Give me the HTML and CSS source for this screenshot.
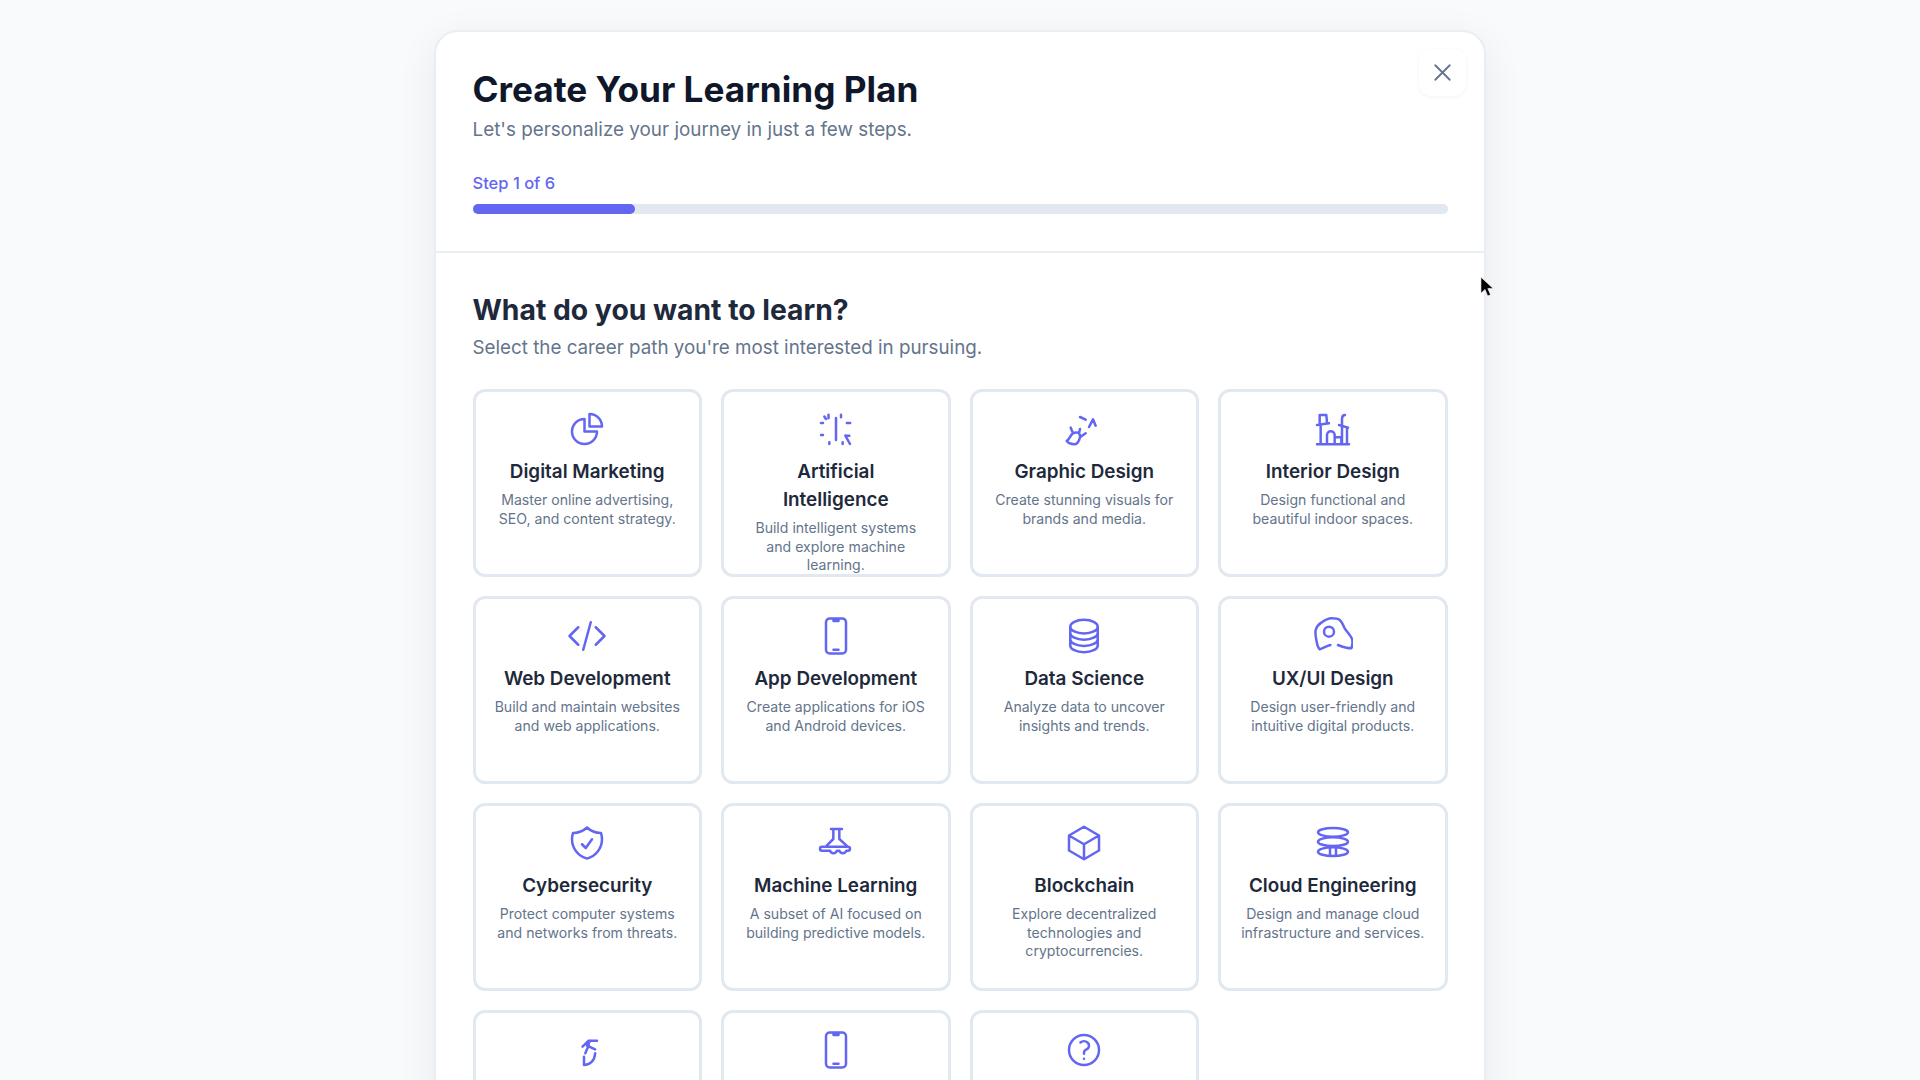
FILE: index.html
```html
<!DOCTYPE html>
<html lang="en">
<head>
    <meta charset="UTF-8">
    <meta name="viewport" content="width=device-width, initial-scale=1.0">
    <title>Create Your Learning Plan</title>
    <link rel="stylesheet" href="styles.css">
</head>
<body>
    <div class="modal">
        <div class="modal-header">
            <button class="close-button" aria-label="Close">
                <svg viewBox="0 0 24 24"><path d="M6 18 18 6M6 6l12 12"/></svg>
            </button>
            <h1>Create Your Learning Plan</h1>
            <p class="subtitle">Let's personalize your journey in just a few steps.</p>
            <div class="step-label">Step 1 of 6</div>
            <div class="progress-track"><div class="progress-fill"></div></div>
        </div>

        <div class="modal-body">
            <h2>What do you want to learn?</h2>
            <p class="section-text">Select the career path you're most interested in pursuing.</p>

            <div class="path-grid">
                <div class="path-card">
                    <svg class="path-icon" viewBox="0 0 24 24"><path d="M10.5 6a7.5 7.5 0 1 0 7.5 7.5h-7.5V6Z"/><path d="M13.5 10.5H21A7.5 7.5 0 0 0 13.5 3v7.5Z"/></svg>
                    <h3>Digital Marketing</h3>
                    <p>Master online advertising, SEO, and content strategy.</p>
                </div>
                <div class="path-card">
                    <svg class="path-icon" viewBox="0 0 24 24"><path d="M12 5.4v13.2M3 8.4h1.2M3 15.6h1.2M18.5 8.4h2M17.6 16l2.8 5M18 16h2M16 20v1M8 20v1M15 3.5V5M5 4.5 6 6M7.5 3.5v2"/></svg>
                    <h3>Artificial Intelligence</h3>
                    <p>Build intelligent systems and explore machine learning.</p>
                </div>
                <div class="path-card">
                    <svg class="path-icon" viewBox="0 0 24 24"><path d="M9.6 4.8 13 6.4M15 10.8l2.4-4.6 1.6 3.8M4 11.2l1.4 3.4M9.6 12 9 14.6M9.6 17 13 14.6M1.6 19.2C3.4 18.4 3.6 15.6 5.4 14.6 6.6 14 8.6 14 9 14.6 9.8 15.4 9.6 16.4 9.6 17 9 19.4 7.6 21.2 6 21.2 4.4 21.2 2.8 20.6 1.6 19.2Z"/></svg>
                    <h3>Graphic Design</h3>
                    <p>Create stunning visuals for brands and media.</p>
                </div>
                <div class="path-card">
                    <svg class="path-icon" viewBox="0 0 24 24"><path d="M2.4 21.2h19.2M4.6 9.6v11.6M4 8.8V3.6h4l.4 4.6M2.4 9.6l7.2-1M8.4 21.2v-5.6a2.3 2.3 0 0 1 4.6 0v5.6M13 17h4v4.2M17.4 21.2V6c0-1.6.6-2.4 1.8-2.4M15.6 9.6l5.4 1.6M20.4 11.2v10"/></svg>
                    <h3>Interior Design</h3>
                    <p>Design functional and beautiful indoor spaces.</p>
                </div>

                <div class="path-card">
                    <svg class="path-icon" viewBox="0 0 24 24"><path d="M17.25 6.75 22.5 12l-5.25 5.25m-10.5 0L1.5 12l5.25-5.25m7.5-3-4.5 16.5"/></svg>
                    <h3>Web Development</h3>
                    <p>Build and maintain websites and web applications.</p>
                </div>
                <div class="path-card">
                    <svg class="path-icon" viewBox="0 0 24 24"><path d="M10.5 1.5H8.25A2.25 2.25 0 0 0 6 3.75v16.5a2.25 2.25 0 0 0 2.25 2.25h7.5A2.25 2.25 0 0 0 18 20.25V3.75a2.25 2.25 0 0 0-2.25-2.25H13.5m-3 0V3h3V1.5m-3 0h3m-3 18.75h3"/></svg>
                    <h3>App Development</h3>
                    <p>Create applications for iOS and Android devices.</p>
                </div>
                <div class="path-card">
                    <svg class="path-icon" viewBox="0 0 24 24"><path d="M20.25 6.375c0 2.278-3.694 4.125-8.25 4.125S3.75 8.653 3.75 6.375m16.5 0c0-2.278-3.694-4.125-8.25-4.125S3.75 4.097 3.75 6.375m16.5 0v11.25c0 2.278-3.694 4.125-8.25 4.125s-8.25-1.847-8.25-4.125V6.375m16.5 0v3.75m-16.5-3.75v3.75m16.5 0v3.75C20.25 16.153 16.556 18 12 18s-8.25-1.847-8.25-4.125v-3.75m16.5 0c0 2.278-3.694 4.125-8.25 4.125s-8.25-1.847-8.25-4.125"/></svg>
                    <h3>Data Science</h3>
                    <p>Analyze data to uncover insights and trends.</p>
                </div>
                <div class="path-card">
                    <svg class="path-icon" viewBox="0 0 24 24"><circle cx="9.6" cy="9.4" r="3"/><path d="M10.4 17.4C8 18 6 19.4 4 20 2.6 18.6 2.4 16.4 2 14.4 1.6 12.4 1.2 10.4 1.6 8.4 2.2 6.4 3.4 5 5 4c2-1.4 4-2.6 6-2.6 2 0 4 .2 5 1 1.4 1.2 2.2 3.2 3 5 1.4 2.2 4.2 4.6 4.6 7 .2 1.8 0 3.6-.6 5-2.6 0-5.6-1-8-2"/></svg>
                    <h3>UX/UI Design</h3>
                    <p>Design user-friendly and intuitive digital products.</p>
                </div>

                <div class="path-card">
                    <svg class="path-icon" viewBox="0 0 24 24"><path d="M9 12.75 11.25 15 15 9.75m-3-7.036A11.959 11.959 0 0 1 3.598 6 11.99 11.99 0 0 0 3 9.749c0 5.592 3.824 10.29 9 11.623 5.176-1.332 9-6.03 9-11.622 0-1.31-.21-2.571-.598-3.751h-.152c-3.196 0-6.1-1.248-8.25-3.285Z"/></svg>
                    <h3>Cybersecurity</h3>
                    <p>Protect computer systems and networks from threats.</p>
                </div>
                <div class="path-card">
                    <svg class="path-icon" viewBox="0 0 24 24"><path d="M9 3.6h6.6M10.4 3.6v6l-4 4M14 3.6v6l4.4 4M3.6 14.2h15.6a1.2 1.2 0 0 1 0 2.4h-1a2.2 2.2 0 0 1-4.2 0h-1.4a2.2 2.2 0 0 1-4.2 0H3.6a1.2 1.2 0 0 1 0-2.4Z"/></svg>
                    <h3>Machine Learning</h3>
                    <p>A subset of AI focused on building predictive models.</p>
                </div>
                <div class="path-card">
                    <svg class="path-icon" viewBox="0 0 24 24"><path d="m21 7.5-9-5.25L3 7.5m18 0-9 5.25m9-5.25v9l-9 5.25M3 7.5l9 5.25M3 7.5v9l9 5.25m0-9v9"/></svg>
                    <h3>Blockchain</h3>
                    <p>Explore decentralized technologies and cryptocurrencies.</p>
                </div>
                <div class="path-card">
                    <svg class="path-icon" viewBox="0 0 24 24"><ellipse cx="12" cy="5.6" rx="9" ry="2.6"/><ellipse cx="12" cy="11.2" rx="9" ry="2.6"/><ellipse cx="12" cy="17.2" rx="9" ry="2.6"/><path d="M10.2 15v4.6M13.8 15v4.6"/></svg>
                    <h3>Cloud Engineering</h3>
                    <p>Design and manage cloud infrastructure and services.</p>
                </div>

                <div class="path-card">
                    <svg class="path-icon" viewBox="0 0 24 24"><path d="M9.3 10 13 6.4h5M14 6.4l-2 3 4.9 2.2M13.1 9 11 14M10.2 16v5c3.6 0 6.4-2.6 6.7-7"/></svg>
                </div>
                <div class="path-card">
                    <svg class="path-icon" viewBox="0 0 24 24"><path d="M10.5 1.5H8.25A2.25 2.25 0 0 0 6 3.75v16.5a2.25 2.25 0 0 0 2.25 2.25h7.5A2.25 2.25 0 0 0 18 20.25V3.75a2.25 2.25 0 0 0-2.25-2.25H13.5m-3 0V3h3V1.5m-3 0h3m-3 18.75h3"/></svg>
                </div>
                <div class="path-card">
                    <svg class="path-icon" viewBox="0 0 24 24"><path d="M9.879 7.519c1.171-1.025 3.071-1.025 4.242 0 1.172 1.025 1.172 2.687 0 3.712-.203.179-.43.326-.67.442-.745.361-1.45.999-1.45 1.827v.75M21 12a9 9 0 1 1-18 0 9 9 0 0 1 18 0Zm-9 5.25h.008v.008H12v-.008Z"/></svg>
                </div>
            </div>
        </div>
    </div>

    <!-- mouse pointer from the capture -->
    <svg class="cursor" viewBox="0 0 16 24"><path d="M1 1v17l4.4-4 2.8 7 3-1.3-2.9-6.7H14Z"/></svg>
</body>
</html>
```

FILE: styles.css
```css
* {
    margin: 0;
    padding: 0;
    box-sizing: border-box;
}

html, body {
    height: 100%;
    overflow: hidden;
}

body {
    font-family: Inter, 'Liberation Sans', sans-serif;
    background: #f8fafc;
    color: #1e293b;
    padding-top: 30px;
}

.modal {
    width: 1052px;
    margin: 0 auto;
    background: white;
    border: 2px solid #e9eef5;
    border-radius: 24px;
    box-shadow: 0 10px 40px rgba(15, 23, 42, 0.07);
}

.modal-header {
    position: relative;
    padding: 33px 36.5px 37px;
    border-bottom: 2px solid #e9eef5;
}

.close-button {
    position: absolute;
    top: 17px;
    right: 18px;
    width: 47px;
    height: 47px;
    display: flex;
    align-items: center;
    justify-content: center;
    background: white;
    border: none;
    border-radius: 12px;
    box-shadow: 0 1px 4px rgba(15, 23, 42, 0.05);
}

.close-button svg {
    width: 29px;
    height: 29px;
    fill: none;
    stroke: #64748b;
    stroke-width: 1.5;
    stroke-linecap: round;
}

h1 {
    font-size: 35.2px;
    font-weight: 700;
    line-height: 48px;
    color: #0f172a;
}

.subtitle {
    margin-top: 3px;
    font-size: 18.85px;
    line-height: 28px;
    color: #64748b;
}

.step-label {
    margin-top: 27px;
    font-size: 16.5px;
    font-weight: 500;
    line-height: 24px;
    color: #6366f1;
}

.progress-track {
    margin-top: 9px;
    height: 10px;
    background: #e2e8f0;
    border-radius: 5px;
}

.progress-fill {
    width: 16.67%;
    height: 100%;
    background: #6366f1;
    border-radius: 5px;
}

.modal-body {
    padding: 38px 36.5px 40px;
}

h2 {
    font-size: 28.3px;
    font-weight: 700;
    line-height: 38px;
    color: #1e293b;
}

.section-text {
    margin-top: 5px;
    font-size: 18.8px;
    line-height: 28px;
    color: #64748b;
}

.path-grid {
    display: grid;
    grid-template-columns: repeat(4, 1fr);
    grid-auto-rows: 188px;
    gap: 19px;
    margin-top: 27px;
}

.path-card {
    display: flex;
    flex-direction: column;
    align-items: center;
    padding: 17px 19px 0;
    background: white;
    border: 3px solid #e2e8f0;
    border-radius: 12px;
    text-align: center;
    overflow: hidden;
}

.path-icon {
    flex: none;
    width: 40px;
    height: 40px;
    fill: none;
    stroke: #6366f1;
    stroke-width: 1.5;
    stroke-linecap: round;
    stroke-linejoin: round;
}

.path-card h3 {
    margin-top: 9px;
    font-size: 18.85px;
    font-weight: 600;
    line-height: 28px;
    color: #1e293b;
}

.path-card p {
    margin-top: 5px;
    font-size: 14.1px;
    line-height: 18.5px;
    color: #64748b;
}

.cursor {
    position: absolute;
    left: 1480px;
    top: 276px;
    width: 15px;
    height: 23px;
    fill: black;
    stroke: white;
    stroke-width: 0.6;
}
```
